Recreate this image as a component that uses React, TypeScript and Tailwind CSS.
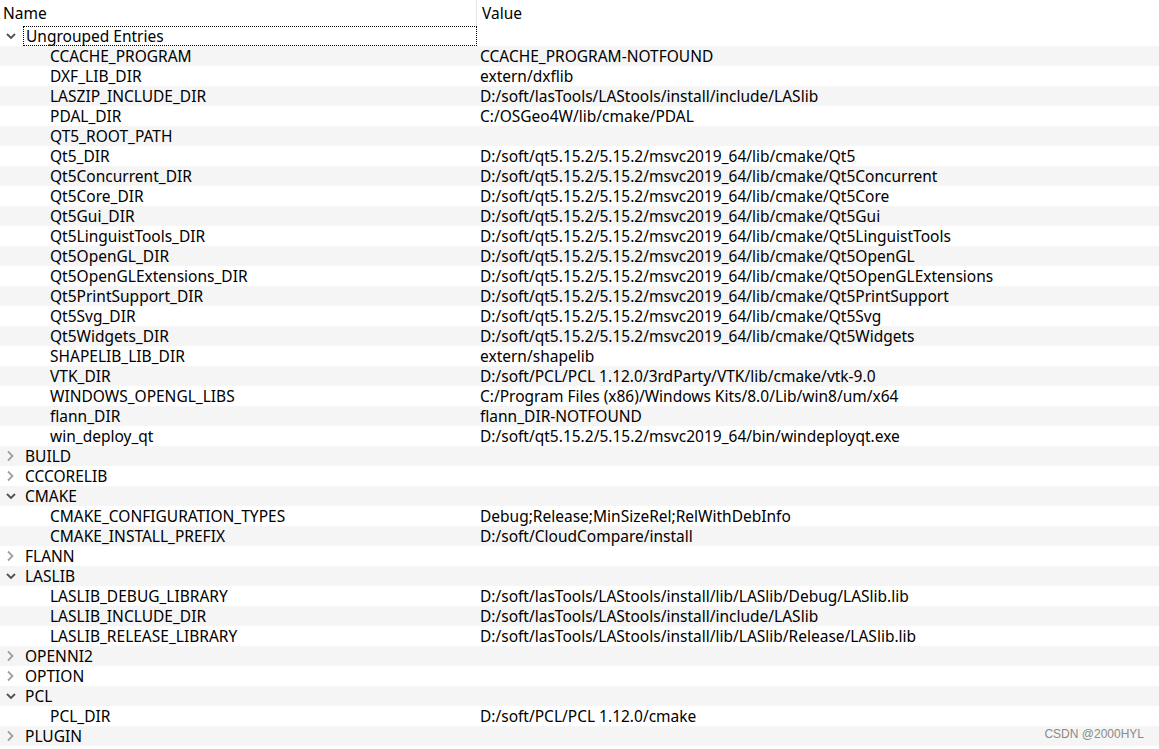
import React from "react";

type Row = {
  name: string;
  value?: string;
  group?: "open" | "closed";
  focused?: boolean;
};

const rows: Row[] = [
  { name: "Ungrouped Entries", group: "open", focused: true },
  { name: "CCACHE_PROGRAM", value: "CCACHE_PROGRAM-NOTFOUND" },
  { name: "DXF_LIB_DIR", value: "extern/dxflib" },
  { name: "LASZIP_INCLUDE_DIR", value: "D:/soft/lasTools/LAStools/install/include/LASlib" },
  { name: "PDAL_DIR", value: "C:/OSGeo4W/lib/cmake/PDAL" },
  { name: "QT5_ROOT_PATH", value: "" },
  { name: "Qt5_DIR", value: "D:/soft/qt5.15.2/5.15.2/msvc2019_64/lib/cmake/Qt5" },
  { name: "Qt5Concurrent_DIR", value: "D:/soft/qt5.15.2/5.15.2/msvc2019_64/lib/cmake/Qt5Concurrent" },
  { name: "Qt5Core_DIR", value: "D:/soft/qt5.15.2/5.15.2/msvc2019_64/lib/cmake/Qt5Core" },
  { name: "Qt5Gui_DIR", value: "D:/soft/qt5.15.2/5.15.2/msvc2019_64/lib/cmake/Qt5Gui" },
  { name: "Qt5LinguistTools_DIR", value: "D:/soft/qt5.15.2/5.15.2/msvc2019_64/lib/cmake/Qt5LinguistTools" },
  { name: "Qt5OpenGL_DIR", value: "D:/soft/qt5.15.2/5.15.2/msvc2019_64/lib/cmake/Qt5OpenGL" },
  { name: "Qt5OpenGLExtensions_DIR", value: "D:/soft/qt5.15.2/5.15.2/msvc2019_64/lib/cmake/Qt5OpenGLExtensions" },
  { name: "Qt5PrintSupport_DIR", value: "D:/soft/qt5.15.2/5.15.2/msvc2019_64/lib/cmake/Qt5PrintSupport" },
  { name: "Qt5Svg_DIR", value: "D:/soft/qt5.15.2/5.15.2/msvc2019_64/lib/cmake/Qt5Svg" },
  { name: "Qt5Widgets_DIR", value: "D:/soft/qt5.15.2/5.15.2/msvc2019_64/lib/cmake/Qt5Widgets" },
  { name: "SHAPELIB_LIB_DIR", value: "extern/shapelib" },
  { name: "VTK_DIR", value: "D:/soft/PCL/PCL 1.12.0/3rdParty/VTK/lib/cmake/vtk-9.0" },
  { name: "WINDOWS_OPENGL_LIBS", value: "C:/Program Files (x86)/Windows Kits/8.0/Lib/win8/um/x64" },
  { name: "flann_DIR", value: "flann_DIR-NOTFOUND" },
  { name: "win_deploy_qt", value: "D:/soft/qt5.15.2/5.15.2/msvc2019_64/bin/windeployqt.exe" },
  { name: "BUILD", group: "closed" },
  { name: "CCCORELIB", group: "closed" },
  { name: "CMAKE", group: "open" },
  { name: "CMAKE_CONFIGURATION_TYPES", value: "Debug;Release;MinSizeRel;RelWithDebInfo" },
  { name: "CMAKE_INSTALL_PREFIX", value: "D:/soft/CloudCompare/install" },
  { name: "FLANN", group: "closed" },
  { name: "LASLIB", group: "open" },
  { name: "LASLIB_DEBUG_LIBRARY", value: "D:/soft/lasTools/LAStools/install/lib/LASlib/Debug/LASlib.lib" },
  { name: "LASLIB_INCLUDE_DIR", value: "D:/soft/lasTools/LAStools/install/include/LASlib" },
  { name: "LASLIB_RELEASE_LIBRARY", value: "D:/soft/lasTools/LAStools/install/lib/LASlib/Release/LASlib.lib" },
  { name: "OPENNI2", group: "closed" },
  { name: "OPTION", group: "closed" },
  { name: "PCL", group: "open" },
  { name: "PCL_DIR", value: "D:/soft/PCL/PCL 1.12.0/cmake" },
  { name: "PLUGIN", group: "closed" },
  { name: "", value: "" },
];

function Chevron({ open }: { open: boolean }) {
  if (open) {
    return (
      <svg width="12" height="12" viewBox="0 0 12 12" className="shrink-0">
        <path d="M2 4 L6 8 L10 4" fill="none" stroke="#505050" strokeWidth="1.8" />
      </svg>
    );
  }
  return (
    <svg width="12" height="12" viewBox="0 0 12 12" className="shrink-0">
      <path d="M3 1.5 L7.5 6 L3 10.5" fill="none" stroke="#a0a0a0" strokeWidth="1.8" />
    </svg>
  );
}

export default function App() {
  return (
    <div
      className="relative h-[749px] w-[1159px] overflow-hidden bg-white text-[15.5px] leading-5 text-black"
      style={{ fontFamily: '"Noto Sans", "Liberation Sans", sans-serif' }}
    >
      <div className="flex h-[26px] items-center">
        <div className="flex h-full w-[477px] items-center border-r border-[#e5e5e5] pl-[3px]">Name</div>
        <div className="pl-[5px]">Value</div>
      </div>
      {rows.map((row, i) => (
        <div key={i} className={`flex h-5 items-center ${i % 2 === 1 ? "bg-[#f5f5f5]" : "bg-white"}`}>
          <div className="flex h-full w-[477px] items-center">
            {row.group ? (
              <>
                <div className="flex w-[23px] justify-center pr-[2px]">
                  <Chevron open={row.group === "open"} />
                </div>
                <div
                  className={`flex h-full flex-1 items-center pl-[2px] ${
                    row.focused ? "border border-dotted border-black" : ""
                  }`}
                >
                  {row.name}
                </div>
              </>
            ) : (
              <div className="pl-[50px]">{row.name}</div>
            )}
          </div>
          <div className="pl-[3px] whitespace-nowrap">{row.value}</div>
        </div>
      ))}
      <div
        className="absolute bottom-[7px] right-[15px] text-[12px] leading-4 text-[#8a8a8a]"
        style={{ fontFamily: '"Liberation Sans", Arial, sans-serif' }}
      >
        CSDN @2000HYL
      </div>
    </div>
  );
}
